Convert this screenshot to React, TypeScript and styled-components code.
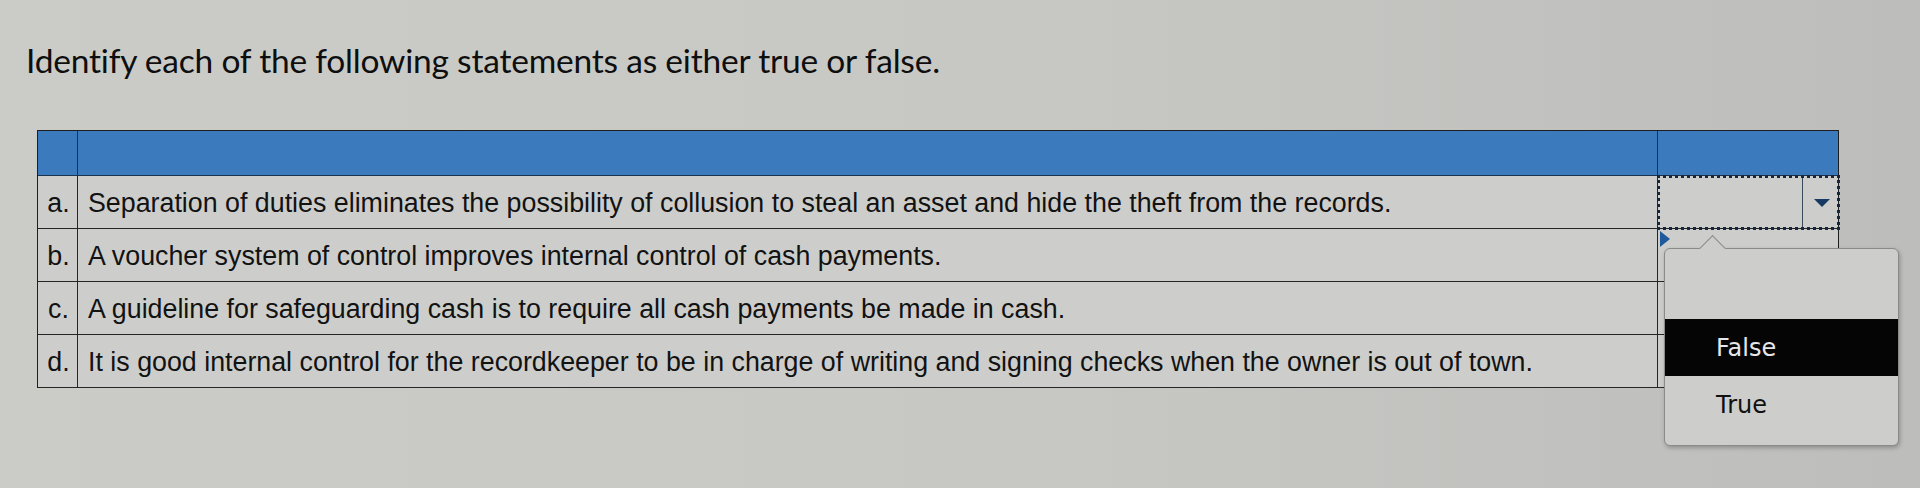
import React, { useState } from 'react'
import styled, { createGlobalStyle } from 'styled-components'

const GlobalStyle = createGlobalStyle`
  html, body {
    margin: 0;
    padding: 0;
  }
  body {
    width: 1920px;
    height: 488px;
    overflow: hidden;
    background: linear-gradient(90deg, #cbccc8 0%, #c7c8c4 55%, #bdbebb 100%);
  }
`

const Page = styled.div`
  padding: 40px 0 0 26px;
  font-family: "Liberation Sans", Arial, sans-serif;
  color: #121212;
`

const Title = styled.h1`
  margin: 0;
  font-family: Lato, "Open Sans", sans-serif;
  font-weight: 400;
  font-size: 33.5px;
  line-height: 40px;
  letter-spacing: -0.2px;
  color: #0e0e0e;
`

const TableWrap = styled.div`
  position: relative;
  margin: 50px 0 0 11px;
  width: 1802px;
`

const Table = styled.div`
  border: 1.5px solid #1e1e1e;
  border-bottom: none;
`

const Row = styled.div<{ $header?: boolean }>`
  display: grid;
  grid-template-columns: 40px 1580px 1fr;
  height: ${p => (p.$header ? '45px' : '53px')};
  background: ${p => (p.$header ? '#3a7abd' : '#cdcecb')};
  border-bottom: 1.5px solid ${p => (p.$header ? '#1c3350' : '#262626')};
  box-sizing: border-box;
`

const Cell = styled.div<{ $header?: boolean; $last?: boolean }>`
  display: flex;
  align-items: center;
  border-right: ${p => (p.$last ? 'none' : `1.5px solid ${p.$header ? '#1c3350' : '#262626'}`)};
  font-size: 26.8px;
  padding-top: 2px;
  box-sizing: border-box;
  position: relative;
`

const Letter = styled(Cell)`
  justify-content: center;
  padding-left: 2px;
`

const Statement = styled(Cell)`
  padding-left: 10px;
  white-space: nowrap;
`

const SelectBox = styled.div`
  position: absolute;
  inset: -1px -2px -2px -1px;
  display: grid;
  grid-template-columns: 1fr 38px;
  outline: 3px dotted #15263d;
  outline-offset: -3px;
`

const SelectArrowBox = styled.div`
  display: flex;
  align-items: center;
  justify-content: center;
  border-left: 1.5px solid #3a4a5c;
`

const Caret = styled.div`
  width: 0;
  height: 0;
  border-left: 8px solid transparent;
  border-right: 8px solid transparent;
  border-top: 8px solid #163a63;
`

const FocusMark = styled.div`
  position: absolute;
  left: 2px;
  top: 2px;
  width: 0;
  height: 0;
  border-top: 8px solid transparent;
  border-bottom: 8px solid transparent;
  border-left: 10px solid #1e5a9c;
`

const Popup = styled.div`
  position: absolute;
  left: 1627px;
  top: 118px;
  width: 235px;
  padding: 70px 0 12px;
  background: #cdcecb;
  border: 1.5px solid #8a8b88;
  border-radius: 6px;
  box-shadow: 1px 2px 4px rgba(0, 0, 0, 0.25);
  box-sizing: border-box;
  font-family: "DejaVu Sans", Verdana, sans-serif;
`

const Notch = styled.div`
  position: absolute;
  left: 38px;
  top: -10px;
  width: 18px;
  height: 18px;
  background: #cdcecb;
  border-left: 1.5px solid #8a8b88;
  border-top: 1.5px solid #8a8b88;
  transform: rotate(45deg);
`

const Option = styled.div<{ $active?: boolean }>`
  height: 57px;
  display: flex;
  align-items: center;
  padding-left: 51px;
  font-size: 24px;
  background: ${p => (p.$active ? '#050505' : 'transparent')};
  color: ${p => (p.$active ? '#e6e6ea' : '#111')};
  cursor: pointer;
`

const statements = [
  { letter: 'a.', text: 'Separation of duties eliminates the possibility of collusion to steal an asset and hide the theft from the records.' },
  { letter: 'b.', text: 'A voucher system of control improves internal control of cash payments.' },
  { letter: 'c.', text: 'A guideline for safeguarding cash is to require all cash payments be made in cash.' },
  { letter: 'd.', text: 'It is good internal control for the recordkeeper to be in charge of writing and signing checks when the owner is out of town.' },
]

export default function App() {
  const [active, setActive] = useState<string>('False')

  return (
    <>
      <GlobalStyle />
      <Page>
        <Title>Identify each of the following statements as either true or false.</Title>
        <TableWrap>
          <Table>
            <Row $header>
              <Letter $header />
              <Statement $header />
              <Cell $header $last />
            </Row>
            {statements.map((s, i) => (
              <Row key={s.letter}>
                <Letter>{s.letter}</Letter>
                <Statement>{s.text}</Statement>
                <Cell $last>
                  {i === 0 && (
                    <SelectBox>
                      <div />
                      <SelectArrowBox>
                        <Caret />
                      </SelectArrowBox>
                    </SelectBox>
                  )}
                  {i === 1 && <FocusMark />}
                </Cell>
              </Row>
            ))}
          </Table>
          <Popup>
            <Notch />
            {['False', 'True'].map(o => (
              <Option key={o} $active={active === o} onMouseEnter={() => setActive(o)}>
                {o}
              </Option>
            ))}
          </Popup>
        </TableWrap>
      </Page>
    </>
  )
}
